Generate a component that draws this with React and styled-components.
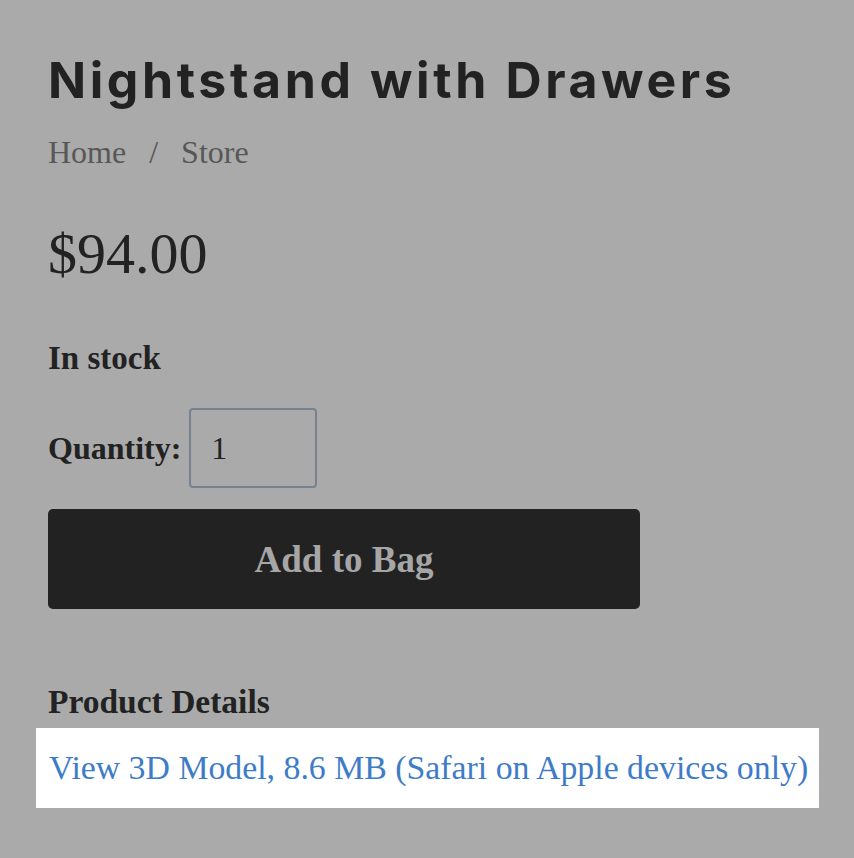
import React from "react";
import styled, { createGlobalStyle } from "styled-components";

const Global = createGlobalStyle`
  html, body { margin: 0; padding: 0; background: #aaaaaa; }
  body { font-family: "Liberation Serif", "DejaVu Serif", serif; color: #222; }
`;

const Page = styled.main`
  padding: 44px 48px 40px 48px;
  display: flex;
  flex-direction: column;
  align-items: flex-start;
`;

const Title = styled.h1`
  margin: 0;
  font-family: "Inter", "Open Sans", sans-serif;
  font-weight: 700;
  font-size: 50px;
  line-height: 72px;
  color: #222;
  letter-spacing: 3.6px;
  white-space: nowrap;
`;

const Crumbs = styled.nav`
  display: flex;
  gap: 23px;
  margin-top: 16px;
  font-size: 32px;
  line-height: 40px;
  color: #575757;
`;

const Price = styled.div`
  margin-top: 47px;
  font-size: 58px;
  line-height: 70px;
  color: #222;
`;

const Stock = styled.div`
  margin-top: 49px;
  font-size: 33px;
  font-weight: 700;
  line-height: 40px;
`;

const QtyRow = styled.label`
  margin-top: 30px;
  display: flex;
  align-items: center;
  gap: 8px;
  font-size: 32px;
  font-weight: 700;
`;

const QtyInput = styled.input`
  box-sizing: border-box;
  width: 128px;
  height: 80px;
  border: 2px solid #778290;
  border-radius: 4px;
  background: transparent;
  padding: 0 20px;
  font-family: inherit;
  font-size: 32px;
  color: #222;
  outline: none;
`;

const AddButton = styled.button`
  margin-top: 21px;
  width: 592px;
  height: 100px;
  border: 0;
  border-radius: 5px;
  background: #222;
  color: #a6a6a6;
  font-family: inherit;
  font-weight: 700;
  font-size: 37px;
`;

const DetailsHeading = styled.h2`
  margin: 73px 0 0;
  font-size: 33.5px;
  font-weight: 700;
  line-height: 40px;
`;

const Highlight = styled.div`
  margin: 6px 0 0 -12px;
  background: #fff;
  padding: 0 11px 0 13px;
  height: 80px;
  display: flex;
  align-items: center;
  white-space: nowrap;
  flex-shrink: 0;
`;

const ModelLink = styled.a`
  color: #3e7cc8;
  text-decoration: none;
  font-size: 33.8px;
  white-space: nowrap;
`;

export default function App() {
  return (
    <>
      <Global />
      <Page>
        <Title>Nightstand with Drawers</Title>
        <Crumbs>
          <span>Home</span>
          <span>/</span>
          <span>Store</span>
        </Crumbs>
        <Price>$94.00</Price>
        <Stock>In stock</Stock>
        <QtyRow>
          Quantity:
          <QtyInput defaultValue="1" />
        </QtyRow>
        <AddButton>Add to Bag</AddButton>
        <DetailsHeading>Product Details</DetailsHeading>
        <Highlight>
          <ModelLink href="#">View 3D Model, 8.6 MB (Safari on Apple devices only)</ModelLink>
        </Highlight>
      </Page>
    </>
  );
}
